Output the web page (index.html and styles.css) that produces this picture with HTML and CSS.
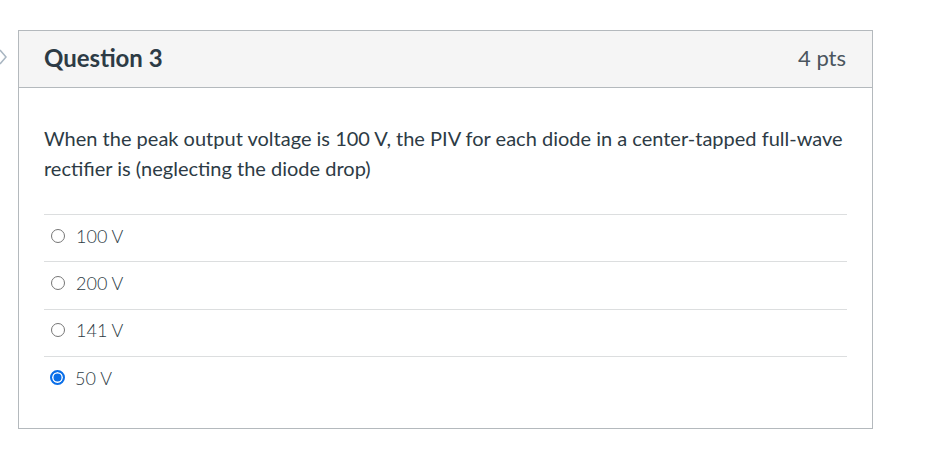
FILE: index.html
```html
<!DOCTYPE html>
<html lang="en">
<head>
  <meta charset="UTF-8">
  <meta name="viewport" content="width=device-width, initial-scale=1.0">
  <title>Question 3</title>
  <link rel="stylesheet" href="styles.css">
</head>
<body>

<div class="page">
  <div class="nav-arrow">
    <svg width="8" height="16" viewBox="0 0 8 16"><path d="M0 1 L6 8 L0 15" fill="none" stroke="#a9b6c2" stroke-width="1.5"/></svg>
  </div>

  <div class="question">
    <div class="question-header">
      <h2 class="question-title">Question 3</h2>
      <span class="question-points">4 pts</span>
    </div>

    <div class="question-body">
      <p class="question-text">When the peak output voltage is 100 V, the PIV for each diode in a center-tapped full-wave rectifier is (neglecting the diode drop)</p>

      <ul class="answers">
        <li class="answer"><span class="radio"></span>100 V</li>
        <li class="answer"><span class="radio"></span>200 V</li>
        <li class="answer"><span class="radio"></span>141 V</li>
        <li class="answer"><span class="radio checked"></span>50 V</li>
      </ul>
    </div>
  </div>
</div>

</body>
</html>
```

FILE: styles.css
```css
body { margin: 0; font-family: Lato, "Open Sans", sans-serif; background: #fff; color: #2d3b45; }
.page { display: flex; align-items: flex-start; padding-top: 30px; }
.nav-arrow { width: 18px; padding-top: 19px; }
.nav-arrow svg { display: block; }
.question { width: 853px; border: 1px solid #b4b9bd; }
.question-header { height: 57px; box-sizing: border-box; padding: 0 26px 4px 25px; background: #f5f5f5; border-bottom: 1px solid #b4b9bd; display: flex; justify-content: space-between; align-items: center; }
.question-title { margin: 0; font-size: 24px; font-weight: 700; color: #2d3b45; }
.question-points { font-size: 22px; color: #4b555e; }
.question-body { padding: 35px 25px 24px 25px; }
.question-text { margin: 0; font-size: 20px; line-height: 30px; }
.answers { list-style: none; margin: 31px 0 0 0; padding: 0; }
.answer { border-top: 1px solid #dcdedf; height: 41.4px; padding: 0 0 5px 7px; display: flex; align-items: center; font-size: 18px; font-weight: 300; color: #2d3b45; }
.radio { width: 12px; height: 12px; border: 1px solid #767676; border-radius: 50%; margin-right: 11px; box-sizing: content-box; }
.radio.checked { width: 11px; height: 11px; margin-left: -1px; margin-right: 10px; border: 2px solid #0b6fe8; background: #0b6fe8; box-shadow: inset 0 0 0 1.5px #fff; }
```
